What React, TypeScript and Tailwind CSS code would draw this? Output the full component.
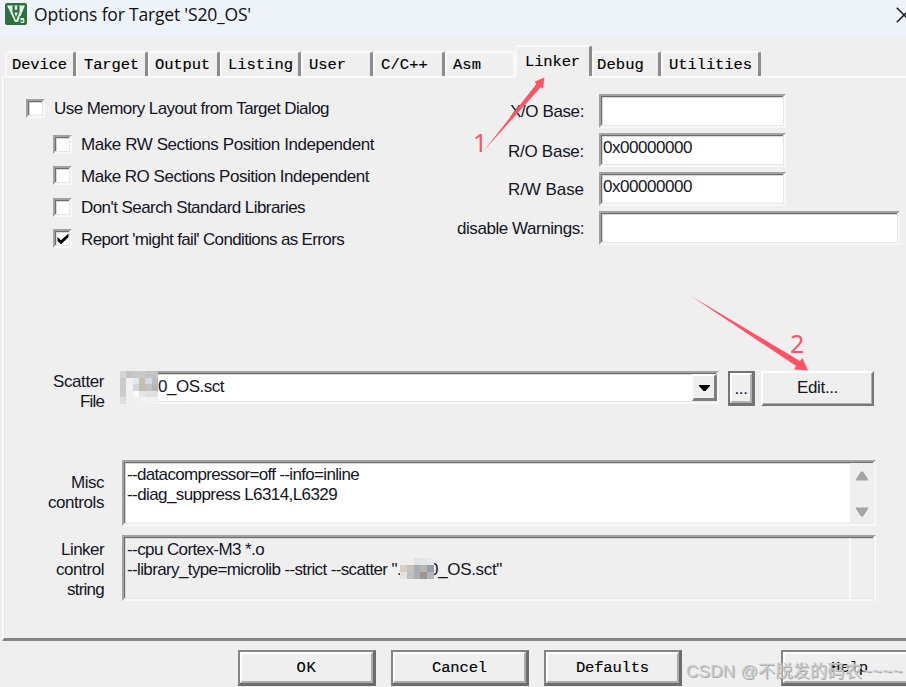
import { useLayoutEffect, useRef, type ReactNode } from 'react';

const sans = "font-['Liberation_Sans',Arial,sans-serif] text-[17px] leading-[20px] text-[#15151f]";
const mono = "font-['Liberation_Mono',monospace] text-[15.5px] leading-[20px] text-black [-webkit-text-stroke:0.15px_black]";

/** One line of text, tracked so that it takes exactly `w` pixels. */
function Fit({ w, children, className = '' }: { w: number; children: string; className?: string }) {
  const ref = useRef<HTMLSpanElement>(null);
  useLayoutEffect(() => {
    const el = ref.current;
    if (!el) return;
    el.style.letterSpacing = '0px';
    const natural = el.getBoundingClientRect().width;
    el.style.letterSpacing = `${(w - natural) / children.length}px`;
  }, [w, children]);
  return (
    <span ref={ref} className={`inline-block shrink-0 whitespace-pre ${className}`}>
      {children}
    </span>
  );
}

const sunken =
  'border-2 border-t-[#a2a2a2] border-l-[#a2a2a2] border-r-[#f8f8f8] border-b-[#f8f8f8] shadow-[inset_-1px_-1px_0_#e6e6e6,inset_1px_1px_0_#6c6c6c,inset_2px_2px_0_#d8d8d8]';

function Check({ label, w, on = false }: { label: string; w: number; on?: boolean }) {
  return (
    <div className={`flex items-center gap-[9px] ${sans}`}>
      <span className={`flex size-[19px] shrink-0 items-center justify-center bg-white ${sunken}`}>
        {on && (
          <svg viewBox="0 0 12 12" className="mt-px ml-px size-[12px]">
            <path d="M.5 4 4 7.200 11.500.500V4.200L4 11.200.500 8Z" fill="#000" />
          </svg>
        )}
      </span>
      <Fit w={w} className="relative top-px">{label}</Fit>
    </div>
  );
}

type TabInfo = { label: string; width: string; pad: string; w: number; edge?: boolean; active?: boolean };
const tabs: TabInfo[] = [
  { label: 'Device', width: 'w-[71px]', pad: 'pl-[5px]', w: 55 },
  { label: 'Target', width: 'w-[72px]', pad: 'pl-[6px]', w: 55 },
  { label: 'Output', width: 'w-[72px]', pad: 'pl-[5px]', w: 55 },
  { label: 'Listing', width: 'w-[81px]', pad: 'pl-[6px]', w: 65 },
  { label: 'User', width: 'w-[72px]', pad: 'pl-[6px]', w: 37 },
  { label: 'C/C++', width: 'w-[72px]', pad: 'pl-[6px]', w: 47 },
  { label: 'Asm', width: 'w-[70px]', pad: 'pl-[6px]', w: 28, edge: false },
  { label: 'Linker', width: 'w-[77px]', pad: 'pl-[8px]', w: 55, active: true },
  { label: 'Debug', width: 'w-[69px]', pad: 'pl-[3px]', w: 47 },
  { label: 'Utilities', width: 'w-[100px]', pad: 'pl-[6px]', w: 83 },
];

function Tab({ label, width, pad, w, edge = true, active }: TabInfo) {
  return (
    <div
      className={`flex shrink-0 items-start rounded-t-[3px] border-t-2 border-l-2 border-t-[#fafafa] border-l-[#f8f8f8] ${width} ${pad} ${mono} ${
        edge ? 'border-r-[3px] border-r-[#8c8c8c]' : 'border-r-2 border-r-[#fafafa]'
      } ${active ? 'h-[31px] pt-[5px]' : 'h-[25px] pt-[2px]'}`}
    >
      <Fit w={w}>{label}</Fit>
    </div>
  );
}

function Field({ label, lw, pad, value, wide }: { label: string; lw: number; pad: string; value?: string; wide?: boolean }) {
  return (
    <div className={`flex h-[34px] ${sans}`}>
      <div className={`flex w-[185px] justify-end ${pad}`}>
        <Fit w={lw}>{label}</Fit>
      </div>
      <div className={`ml-[15px] bg-white pt-[3px] pl-[2px] ${wide ? 'w-[301px]' : 'w-[187px]'} ${sunken}`}>
        {value && <Fit w={89}>{value}</Fit>}
      </div>
    </div>
  );
}

function SideLabel({ lines, className = '' }: { lines: [string, number][]; className?: string }) {
  return (
    <div className={`flex w-[100px] shrink-0 flex-col items-end ${sans} leading-[19.5px] ${className}`}>
      {lines.map(([t, w]) => (
        <Fit key={t} w={w}>{t}</Fit>
      ))}
    </div>
  );
}

function Mosaic({ colors, className }: { colors: string[]; className: string }) {
  return (
    <div className={`grid ${className}`}>
      {colors.map((c, i) => (
        <i key={i} style={{ backgroundColor: c }} />
      ))}
    </div>
  );
}

const fileMosaic = [
  '#d4d4d4', '#c4c4c4', '#c9c9c9', '#c9c9c9', '#c3c3c3', '#c3c3c3',
  '#c9c9c9', '#f1eeeb', '#e4e7ec', '#c3beb4', '#d6d9df', '#b8bcc4',
  '#cbcbcb', '#f3f1ee', '#d4d6da', '#c0bcb1', '#c4c2bd', '#b0b5bd',
  '#cccccc', '#efefef', '#fafafa', '#e8e8e8', '#dfdfdf', '#e1e1e1',
  '#dddddd', '#efefef', '#f0f0f0', '#f1f1f1', '#f2f2f2', '#f3f3f3',
];
const pathMosaic = [
  '#efedec', '#eeeeee', '#e2e3e5', '#e3e4e6', '#e9e9ea',
  '#d5cec8', '#c9c2bd', '#a5acb6', '#bab5aa', '#929eab',
  '#e4e2e1', '#c0bfc0', '#a8adb7', '#9c9594', '#b3b4b9',
];

function Button({ children, w }: { children: string; w: number }) {
  return (
    <div className="h-[36px] w-[138px] shrink-0 border-t-2 border-l-2 border-r-[3px] border-b-[3px] border-t-[#858585] border-l-[#858585] border-r-[#6d6d6d] border-b-[#6d6d6d]">
      <div className={`flex h-full justify-center border-2 border-t-white border-l-white border-r-[#aaa] border-b-[#aaa] pt-[4px] ${mono}`}>
        <Fit w={w}>{children}</Fit>
      </div>
    </div>
  );
}

function Triangle({ down = false }: { down?: boolean }) {
  return (
    <svg viewBox="0 0 12 10" className={`h-[10px] w-[12px] ${down ? 'rotate-180' : ''}`}>
      <path d="M5 .5h2L12 8v1.5H0V8Z" fill="#a5a5a5" />
    </svg>
  );
}

function Caption({ children }: { children: ReactNode }) {
  return <div className="flex h-[38px] items-start bg-[#eef3f9]">{children}</div>;
}

export default function App() {
  return (
    <div className="relative h-[687px] w-[906px] overflow-hidden bg-[#efefef]">
      <Caption>
        <svg viewBox="0 0 22 22" className="mt-[3px] ml-[5px] size-[22px] shrink-0">
          <rect width="22" height="22" rx="2" fill="#2c713f" />
          <path d="M2 2.500h18L13 19h-3Z" fill="#e9f2eb" />
          <path d="M7.500 2.500v7l3.500 8 3.500-8v-7h-2.300v4.300H9.800V2.500Z" fill="#2c713f" />
          <path d="M9.300 9.500h3.600L11 14Z" fill="#e9f2eb" />
          <rect x="14.500" y="13" width="6" height="7.500" fill="#2c713f" />
          <text x="15" y="20" fontSize="8" fontWeight="bold" fill="#fff" fontFamily="Liberation Sans">5</text>
        </svg>
        <div className="mt-[2px] ml-[7px] font-['Open_Sans',sans-serif] text-[17.5px] leading-[24px] text-[#111]">
          <Fit w={217}>Options for Target 'S20_OS'</Fit>
        </div>
        <svg viewBox="0 0 16 16" className="mt-[7px] ml-auto -mr-[6px] size-[16px] shrink-0">
          <path d="m.8.800 14.400 14.400M15.200.800.800 15.200" stroke="#111" strokeWidth="1.500" />
        </svg>
      </Caption>

      <div className="flex h-[38px] items-end pl-[5px]">
        {tabs.map((t) => (
          <Tab key={t.label} {...t} />
        ))}
      </div>

      <div className="flex">
        <div className="ml-[2px] h-[2px] w-[513px] bg-[#fafafa]" />
        <div className="h-[2px] w-[75px]" />
        <div className="h-[2px] flex-1 bg-[#fafafa]" />
      </div>

      <div className="ml-[2px] h-[563px] border-b-[3px] border-l-2 border-b-[#858585] border-l-[#fafafa] shadow-[inset_1px_0_0_#e4e4e4]">
        <div className="flex h-[293px]">
          <div className="w-[395px] pt-[20px] pl-[22px]">
            <Check label="Use Memory Layout from Target Dialog" w={275} />
            <div className="mt-[16px] ml-[27px] flex flex-col gap-[11.500px]">
              <Check label="Make RW Sections Position Independent" w={293} />
              <Check label="Make RO Sections Position Independent" w={288} />
              <Check label="Don't Search Standard Libraries" w={224} />
              <Check label="Report 'might fail' Conditions as Errors" w={263} on />
            </div>
          </div>
          <div className="flex flex-col gap-[5px] pt-[16px]">
            <Field label="X/O Base:" lw={74} pad="pt-[8px]" />
            <Field label="R/O Base:" lw={76} pad="pt-[9px]" value="0x00000000" />
            <Field label="R/W Base" lw={76} pad="pt-[8px]" value="0x00000000" />
            <Field label="disable Warnings:" lw={127} pad="pt-[8px]" wide />
          </div>
        </div>

        <div className="flex h-[89px]">
          <SideLabel lines={[['Scatter', 51], ['File', 24]]} className="pt-px" />
          <div className={`ml-[16px] flex h-[33px] w-[599px] bg-white ${sunken}`}>
            <Mosaic
              colors={fileMosaic}
              className="-mt-[2px] -ml-[2px] h-[33px] w-[38px] shrink-0 grid-cols-6 grid-rows-5"
            />
            <div className={`pt-[4px] ${sans}`}>
              <Fit w={66}>0_OS.sct</Fit>
            </div>
            <div className="mt-px ml-auto flex h-[27px] w-[25px] items-center justify-center border-t-2 border-r-[3px] border-b-[3px] border-l-2 border-t-white border-r-[#808080] border-b-[#808080] border-l-[#f8f8f8] bg-[#efefef]">
              <svg viewBox="0 0 11 6" className="mt-px h-[6px] w-[11px]">
                <path d="M0 0h11v1L6.500 6h-2L0 1Z" fill="#000" />
              </svg>
            </div>
          </div>
          <div className="ml-[9px] h-[35px] w-[27px] border-t-2 border-r-[3px] border-b-[3px] border-l-2 border-[#737373]">
            <div className={`flex h-full justify-center border-2 border-t-white border-r-[#b0b0b0] border-b-[#b0b0b0] border-l-white pt-[4px] ${sans}`}>
              <Fit w={13}>...</Fit>
            </div>
          </div>
          <div className={`ml-[6px] flex h-[35px] w-[113px] justify-center border-2 border-t-white border-r-[#777] border-b-[#777] border-l-white pt-[5px] shadow-[inset_-1px_-1px_0_#b0b0b0] ${sans}`}>
            <Fit w={41}>Edit...</Fit>
          </div>
        </div>

        <div className="flex h-[75px]">
          <SideLabel lines={[['Misc', 33], ['controls', 56]]} className="pt-[13px]" />
          <div className={`ml-[18px] flex h-[66px] w-[754px] bg-white ${sunken}`}>
            <div className={`flex flex-col items-start pt-[3px] pl-[3px] ${sans} leading-[19.5px]`}>
              <Fit w={232}>--datacompressor=off --info=inline</Fit>
              <Fit w={210}>--diag_suppress L6314,L6329</Fit>
            </div>
            <div className="mt-px ml-auto flex w-[24px] flex-col items-center justify-between bg-[#efefef] pt-[8px] pb-[7px]">
              <Triangle />
              <Triangle down />
            </div>
          </div>
        </div>

        <div className="flex">
          <SideLabel lines={[['Linker', 43], ['control', 48], ['string', 37]]} className="pt-[5px]" />
          <div className={`ml-[18px] flex h-[66px] w-[754px] ${sunken}`}>
            <div className={`flex flex-col items-start pt-[3px] pl-[3px] ${sans} leading-[19.5px]`}>
              <Fit w={137}>--cpu Cortex-M3 *.o</Fit>
              <div className="flex">
                <Fit w={274}>--library_type=microlib --strict --scatter ".</Fit>
                <Mosaic
                  colors={pathMosaic}
                  className="relative z-10 -mt-[2px] -ml-px h-[21px] w-[34px] grid-cols-5 grid-rows-3"
                />
                <Fit w={73} className="-ml-[5px]">0_OS.sct"</Fit>
              </div>
            </div>
            <div className="mt-px ml-auto w-[25px] border-l-2 border-l-[#fbfbfb]" />
          </div>
        </div>
      </div>

      <div className="flex gap-[15px] pt-[9px] pl-[238px]">
        <Button w={20}>OK</Button>
        <Button w={55}>Cancel</Button>
        <Button w={73}>Defaults</Button>
        <div className="ml-[84px]">
          <Button w={37}>Help</Button>
        </div>
      </div>

      <svg viewBox="0 0 906 687" className="pointer-events-none absolute inset-0 h-[687px] w-[906px]">
        <path d="M484 150.500 536 84.500 535 81.500 544.500 77.500 543 88 540.500 87.500Z" fill="#ff5465" />
        <path d="M691 296 800 361 802.500 358 808 370.500 794 369.500 796 366Z" fill="#ff5465" />
      </svg>
      <div className="absolute top-[127px] left-[473px] font-['Noto_Sans',sans-serif] text-[25px] leading-[30px] text-[#ff5465]">1</div>
      <div className="absolute top-[328px] left-[790px] font-['Noto_Sans',sans-serif] text-[25px] leading-[30px] text-[#ff5465]">2</div>
      <div className="absolute top-[659px] left-[686px] font-['Liberation_Sans','Noto_Sans_CJK_SC',sans-serif] text-[17px] leading-[25px] text-[#cbcbcb] [text-shadow:1px_1px_0_#a8a8a8]">
        <Fit w={217}>CSDN @不脱发的码农~~~~</Fit>
      </div>
    </div>
  );
}
